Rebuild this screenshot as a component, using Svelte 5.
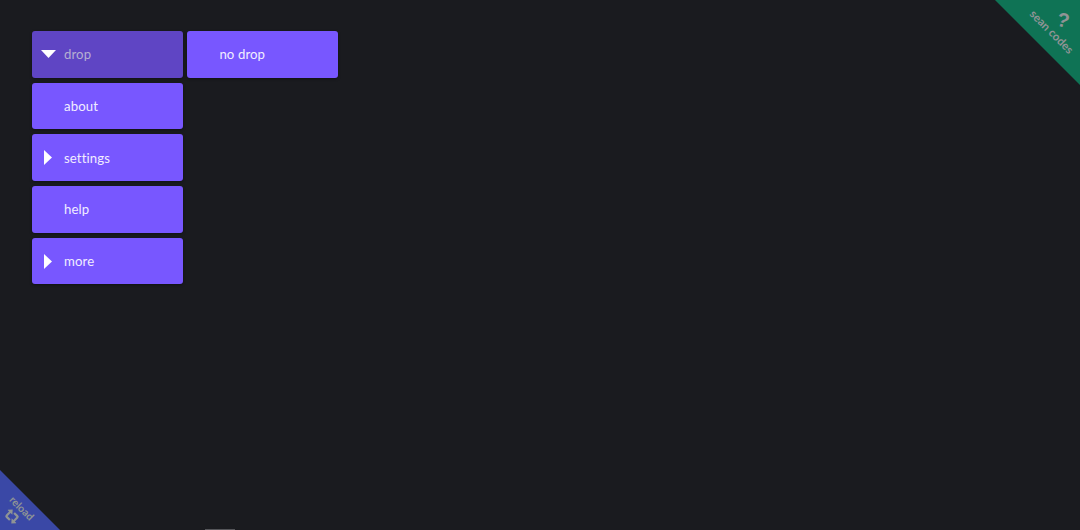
<script>
  const left = [
    { label: "drop", arrow: "down", active: true },
    { label: "about" },
    { label: "settings", arrow: "right" },
    { label: "help" },
    { label: "more", arrow: "right" }
  ];
</script>

<main class="page">
  <div class="menus">
    <nav class="column">
      {#each left as item}
        <button class="item" class:active={item.active}>
          <span class="arrow">
            {#if item.arrow === "down"}
              <svg class="down" width="15" height="8" viewBox="0 0 15 8"><path d="M0 0h15L7.5 8z" fill="#fff" /></svg>
            {:else if item.arrow === "right"}
              <svg width="8" height="15" viewBox="0 0 8 15"><path d="M0 0v15l8-7.5z" fill="#fff" /></svg>
            {/if}
          </span>
          <span class="label">{item.label}</span>
        </button>
      {/each}
    </nav>
    <nav class="column">
      <button class="item">
        <span class="arrow"></span>
        <span class="label">no drop</span>
      </button>
    </nav>
  </div>
</main>

<!-- corner ribbons -->
<a class="corner sean" href="#top">
  <span class="mark">?</span>
  <span class="name">sean codes</span>
</a>
<button class="corner reload">
  <span class="name">reload</span>
  <svg class="retweet" width="16" height="13" viewBox="0 0 16 13">
    <path d="M3.5 4v5.5q0 1 1 1H9M12.500 9V3.500q0-1-1-1H7" fill="none" stroke="currentColor" stroke-width="2.2" />
    <path d="M0 5L3.500 1 7 5zM9 8l3.500 4L16 8z" fill="currentColor" />
  </svg>
</button>
<div class="handle"></div>

<style>
:global(body) {
  margin: 0;
  background: #1a1b1f;
  overflow: hidden;
}

.page {
  height: 530px;
  box-sizing: border-box;
  padding: 31px 0 0 32px;
  font-family: Lato, "Open Sans", sans-serif;
}

.menus {
  display: flex;
  align-items: flex-start;
  gap: 4.6px;
}

.column {
  display: flex;
  flex-direction: column;
  gap: 5px;
}

.item {
  display: flex;
  align-items: center;
  width: 150.8px;
  height: 46.7px;
  padding: 0;
  border: 0;
  border-radius: 3px;
  background: #7857ff;
  box-shadow: 0 1px 3px rgba(0, 0, 0, 0.4);
  color: #f1edff;
  font: inherit;
  font-size: 13.2px;
  letter-spacing: 0.1px;
  cursor: pointer;
}

.item.active {
  background: #5f45c4;
  color: #b5aed2;
}

.arrow {
  display: flex;
  justify-content: center;
  width: 32px;
  box-sizing: border-box;
  flex: none;
}

.arrow .down {
  margin-left: 1px;
}

.label {
  line-height: 1;
  padding-top: 1px;
}

.corner {
  position: fixed;
  border: 0;
  padding: 0;
  font-family: Lato, "Open Sans", sans-serif;
  text-decoration: none;
  color: #8f9495;
}

.sean {
  top: 0;
  right: 0;
  width: 85px;
  height: 85px;
  background: #0f7355;
  clip-path: polygon(0 0, 100% 0, 100% 100%);
}

.sean .name {
  position: absolute;
  top: 25px;
  left: 29px;
  font-size: 11.5px;
  font-weight: 700;
  white-space: nowrap;
  transform: rotate(45deg);
}

.sean .mark {
  position: absolute;
  top: 10px;
  left: 62px;
  font-family: "Liberation Sans", sans-serif;
  font-size: 20px;
  font-weight: 700;
  line-height: 1;
  transform: rotate(15deg);
}

.reload {
  bottom: 0;
  left: 0;
  width: 60px;
  height: 60px;
  background: #3a48a6;
  clip-path: polygon(0 0, 100% 100%, 0 100%);
}

.reload .name {
  position: absolute;
  top: 33px;
  left: 7px;
  font-size: 10.5px;
  font-weight: 700;
  line-height: 1;
  transform: rotate(45deg);
}

.retweet {
  position: absolute;
  top: 40px;
  left: 4px;
  transform: rotate(45deg);
}

.handle {
  position: fixed;
  bottom: 0;
  left: 205px;
  width: 30px;
  height: 1px;
  background: #55565a;
}
</style>
